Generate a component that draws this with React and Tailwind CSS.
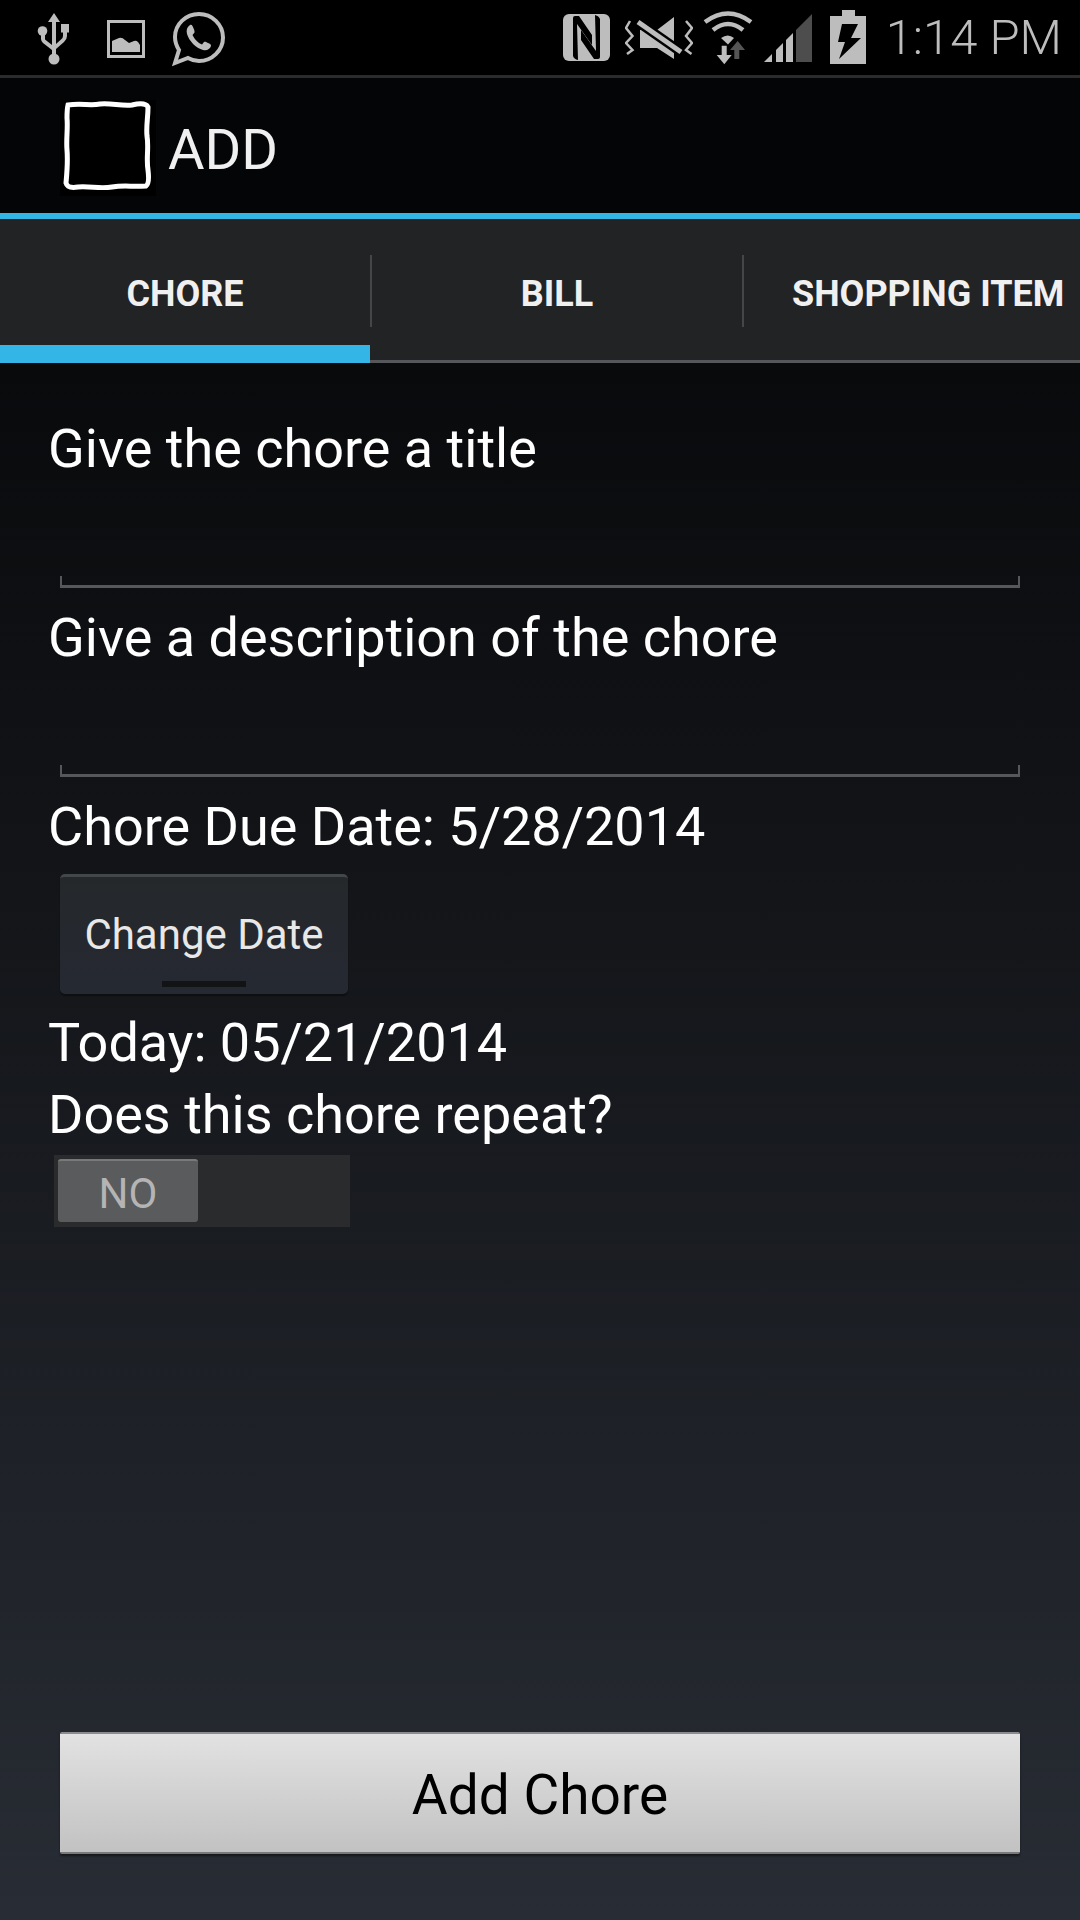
import { useState } from "react";

const font = "font-['Roboto','Noto_Sans',sans-serif]";

function UsbIcon() {
    return (
        <svg width="34" height="54" viewBox="0 0 34 54" className="ml-[37px] mt-[12px]" fill="#bdbdbd">
            <path d="M17 1 L23 10 L19 10 L19 42 L15 42 L15 10 L11 10 Z" />
            <circle cx="17" cy="47" r="5.5" />
            <circle cx="5.5" cy="19" r="4.8" />
            <rect x="24" y="12" width="8" height="8.5" />
            <path d="M4 22 L4 27 Q4 29 6 31 L15 38 L15 33 L8 27.5 L8 22 Z" />
            <path d="M26 20 L26 24 Q26 26 24 27.5 L19 32 L19 37 L27 30 Q30 27.5 30 24 L30 20 Z" />
        </svg>
    );
}

function ImageIcon() {
    return (
        <svg width="38" height="38" viewBox="0 0 38 38" className="ml-[36px] mt-[20px]" fill="#bdbdbd">
            <path fillRule="evenodd" d="M0 0 H38 V38 H0 Z M3 3 V35 H35 V3 Z" />
            <path d="M5 32 V21 L12 18 Q15 17 18 20 L22 23 L27 21 Q29 20 31 22 L33 25 V32 Z" />
        </svg>
    );
}

function WhatsappIcon() {
    return (
        <svg width="54" height="56" viewBox="0 0 54 56" className="ml-[27px] mt-[11px]">
            <path d="M27 3 C14 3 3 13 3 26 C3 31 4.5 35 7 39 L3 52 L16 47 C19.5 49 23 50 27 50 C40 50 51 39.5 51 26.5 C51 13.5 40 3 27 3 Z" fill="none" stroke="#bdbdbd" strokeWidth="4" />
            <path d="M18 14 C15 16 14 19 15 23 C17 30 24 37 31 39 C35 40 38 38 39 35 C39 33 38 33 36 32 C34 31 33 30.5 32 31 L30 33.5 C26 32 22 27.5 20.5 24 L22.5 21.5 C23 20 21.5 17 20.5 15 C20 14 19 13.5 18 14 Z" fill="#bdbdbd" />
        </svg>
    );
}

function NfcIcon() {
    const hook = "M10 4 Q10 2 12 2 H16 L29 21 V31 L14 10 L15 46 Q11 45 10 42 Z";
    return (
        <svg width="47" height="47" viewBox="0 0 47 47" className="mt-[14px]">
            <rect width="47" height="47" rx="6" fill="#bdbdbd" />
            <path d={hook} fill="#000" />
            <path d={hook} fill="#000" transform="rotate(180 23.5 23.5)" />
        </svg>
    );
}

function VibrateMuteIcon() {
    return (
        <svg width="68" height="44" viewBox="0 0 68 44" className="ml-[15px] mt-[16px]">
            <path d="M15 14 H32 L49 1 V43 L32 32 H15 Z" fill="#bdbdbd" />
            <path d="M13 6 L56 36" stroke="#000" strokeWidth="10" />
            <path d="M13 6 L56 36" stroke="#bdbdbd" strokeWidth="5" />
            <path d="M5 5 L1 12 L7.5 20 L1 27 L7.5 34 L2 38" fill="none" stroke="#bdbdbd" strokeWidth="2.5" />
            <path d="M61 5 L67 12 L61 20 L67 27 L61 34 L66.5 38" fill="none" stroke="#bdbdbd" strokeWidth="2.5" />
        </svg>
    );
}

function WifiIcon() {
    return (
        <svg width="50" height="54" viewBox="0 0 50 54" className="ml-[10px] mt-[11px]">
            <path d="M2 11 Q25 -6 48 11" fill="none" stroke="#bdbdbd" strokeWidth="4.5" />
            <path d="M10 19 Q25 7 40 19" fill="none" stroke="#bdbdbd" strokeWidth="4.5" />
            <path d="M18 27 Q25 22 31 27 L25 33.5 Z" fill="#bdbdbd" />
            <path d="M18.7 34.7 H23.7 V44 H28.7 L21.3 53.3 L13.7 44 H18.7 Z" fill="#bdbdbd" />
            <path d="M31.3 48 V39 H27 L34.7 30 L42 39 H36.3 V48 Z" fill="#555" />
        </svg>
    );
}

function SignalIcon() {
    return (
        <svg width="48" height="48" viewBox="0 0 48 48" className="ml-[11px] mt-[14px]">
            <path d="M0 48 L8 40 V48 Z" fill="#bdbdbd" />
            <path d="M12 36 L19 29 V48 H12 Z" fill="#bdbdbd" />
            <path d="M22 26 L29 19 V48 H22 Z" fill="#bdbdbd" />
            <path d="M32 16 L48 0 V48 H32 Z" fill="#4d4d4d" />
        </svg>
    );
}

function BatteryIcon() {
    return (
        <svg width="36" height="54" viewBox="0 0 36 54" className="ml-[18px] mt-[10px]">
            <path d="M12 0 H25 V6 H36 V54 H0 V6 H12 Z" fill="#bdbdbd" />
            <path d="M12 14 H28 L21 28 H31 L9 49 L15 32 H8 Z" fill="#000" />
        </svg>
    );
}

function StatusBar() {
    return (
        <div className="flex h-[75px] justify-between bg-black">
            <div className="flex items-start">
                <UsbIcon />
                <ImageIcon />
                <WhatsappIcon />
            </div>
            <div className="flex items-start pr-[18px]">
                <NfcIcon />
                <VibrateMuteIcon />
                <WifiIcon />
                <SignalIcon />
                <BatteryIcon />
                <span className="ml-[20px] mt-[11px] text-[49px] leading-[54px] font-light text-[#bdbdbd]">1:14 PM</span>
            </div>
        </div>
    );
}

function Logo() {
    return (
        <div className="ml-[60px] h-[96px] w-[96px] bg-black">
            <svg width="96" height="96" viewBox="0 0 96 96">
                <path
                    d="M8 5 C22 3 30 6 40 4 C52 3 60 6 72 5 C80 3 86 3 88 7 C88 18 86 26 87 36 C89 48 86 58 88 70 C89 78 89 84 86 86 C72 87 64 85 52 87 C40 89 30 86 18 87 C12 88 7 87 6 83 C7 72 8 62 7 50 C6 40 8 28 7 18 C7 12 7 9 8 5 Z"
                    fill="none"
                    stroke="#fff"
                    strokeWidth="5"
                />
            </svg>
        </div>
    );
}

function Tab({ label, selected, divider }) {
    return (
        <div className="relative flex h-full w-[372px] shrink-0 items-center justify-center pr-[2px] pt-[8px]">
            <span className="whitespace-nowrap text-[36px] font-bold leading-[42px] text-[#f0f0f0]">{label}</span>
            {divider && <div className="absolute right-0 top-[36px] h-[72px] w-[2px] bg-[#444648]" />}
            {selected && <div className="absolute -bottom-[3px] left-0 h-[18px] w-[370px] bg-[#33b5e5]" />}
        </div>
    );
}

function Label({ children }) {
    return <div className="pl-[48px] text-[54px] leading-[72px] text-white">{children}</div>;
}

function TextLine() {
    return (
        <div className="flex h-[117px] items-start px-[60px] pt-[91px]">
            <div className="h-[12px] w-full border-x-2 border-b-[3px] border-[#55575a]" />
        </div>
    );
}

export default function App() {
    const [repeat] = useState(false);

    return (
        <div className={`flex h-[1920px] w-[1080px] flex-col overflow-hidden bg-black ${font}`}>
            <StatusBar />
            <div className="h-[3px] bg-[#2b2b2b]" />

            {/* action bar */}
            <div className="flex h-[135px] items-center bg-[#040506] pt-[5px]">
                <Logo />
                <span className="ml-[12px] mt-[3px] text-[56px] leading-[60px] text-[#f0f0f0]">ADD</span>
            </div>
            <div className="h-[6px] bg-[#33b5e5]" />

            {/* tabs */}
            <div className="flex h-[144px] border-b-[3px] border-[#55575a] bg-[#212324]">
                <Tab label="CHORE" selected divider />
                <Tab label="BILL" divider />
                <div className="flex h-full flex-1 items-center pl-[48px] pt-[8px]">
                    <span className="whitespace-nowrap text-[36px] font-bold leading-[42px] text-[#f0f0f0]">SHOPPING ITEM</span>
                </div>
            </div>

            {/* form */}
            <div className="flex flex-1 flex-col bg-gradient-to-b from-[#090a0c] to-[#282c34] pt-[50px]">
                <Label>Give the chore a title</Label>
                <TextLine />
                <Label>Give a description of the chore</Label>
                <TextLine />
                <Label>Chore Due Date: 5/28/2014</Label>

                <div className="mb-[13px] ml-[60px] mt-[11px] flex h-[120px] w-[288px] flex-col items-center rounded-[5px] border-t-[3px] border-[#44474a] bg-gradient-to-b from-[#25282b] to-[#252932] shadow-[0_2px_1px_#0e0f11]">
                    <span className="mt-[34px] text-[42px] leading-[48px] text-[#e8e8e8]">Change Date</span>
                    <div className="mt-[22px] h-[6px] w-[84px] bg-[#121315]" />
                </div>

                <Label>Today: 05/21/2014</Label>
                <Label>Does this chore repeat?</Label>

                <div className="ml-[54px] mt-[4px] flex h-[72px] w-[296px] bg-[#2a2b2d] p-[4px]">
                    <div className="flex h-[63px] w-[140px] items-center justify-center rounded-[3px] border-t-2 border-[#77797b] bg-[#5a5b5c] pt-[4px] text-[42px] text-[#b4b4b4]">
                        {repeat ? "YES" : "NO"}
                    </div>
                </div>

                <div className="mx-[60px] mb-[66px] mt-auto flex h-[122px] items-center justify-center rounded-[2px] border-y-2 border-t-[#8a8c8e] border-b-[#77797b] bg-gradient-to-b from-[#e2e2e2] to-[#c2c2c2] pt-[4px] text-[55px] text-black shadow-[0_2px_2px_#16181c]">
                    Add Chore
                </div>
            </div>
        </div>
    );
}
